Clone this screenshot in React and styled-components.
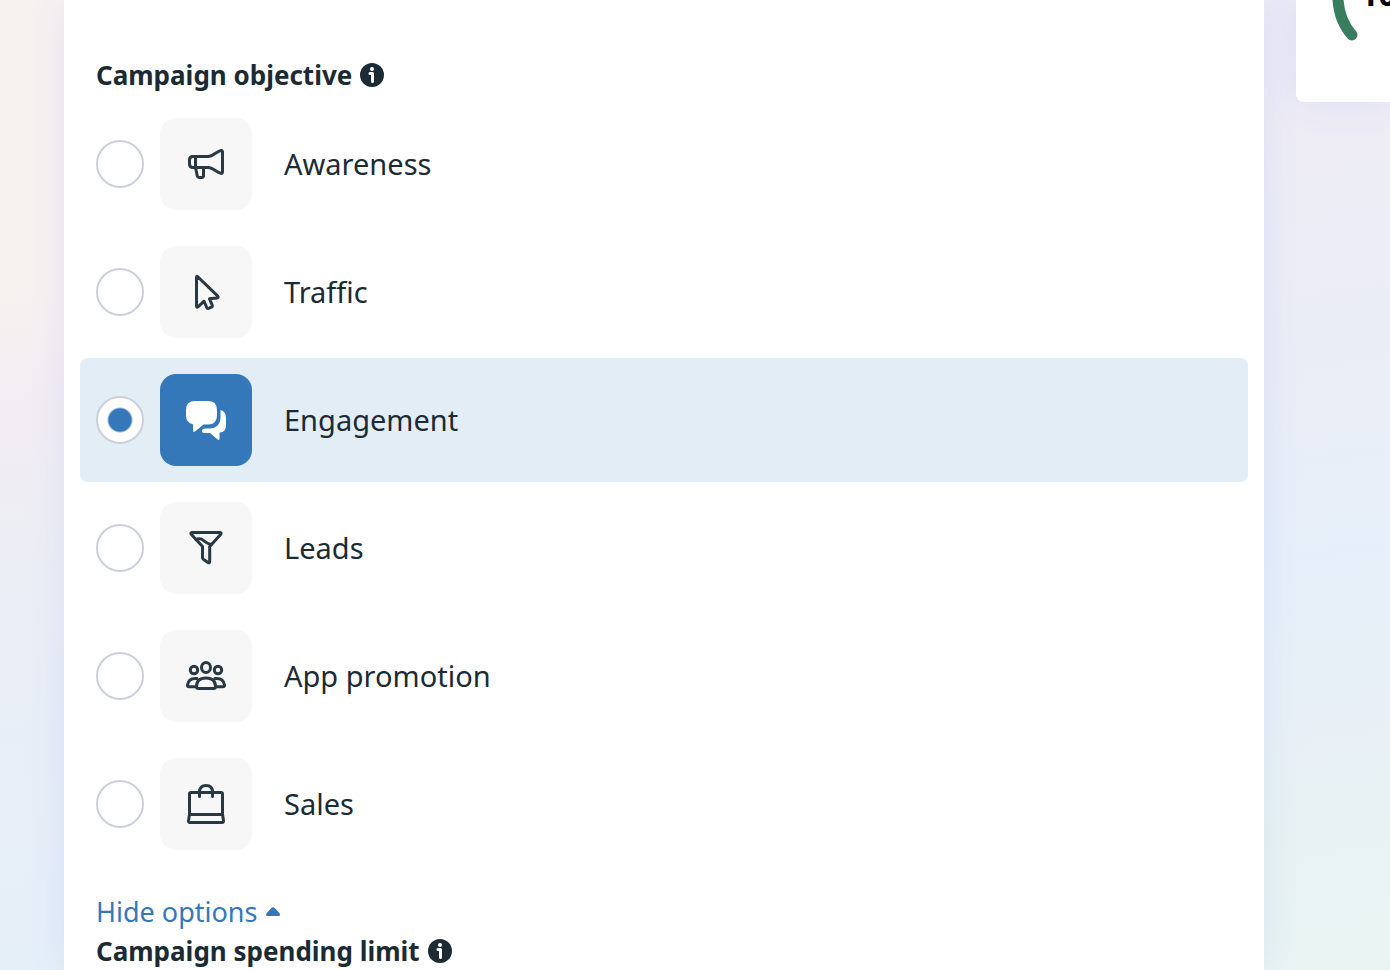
import React, { useState } from 'react';
import styled, { createGlobalStyle } from 'styled-components';

const GlobalStyle = createGlobalStyle`
  *, *::before, *::after { box-sizing: border-box; }
  body {
    margin: 0;
    color: #1c2b33;
    font-family: "Noto Sans", "Open Sans", sans-serif;
  }
`;

const Page = styled.div`
  display: flex;
  align-items: flex-start;
  gap: 32px;
  min-height: 100vh;
  padding-left: 64px;
  overflow: hidden;
  background:
    linear-gradient(#f7f1f0 0%, #f7f1f0 30%, #f2edf3 42%, #ebeef5 60%, #e8eef7 75%, #e5eff8 100%) left / 50% 100% no-repeat,
    linear-gradient(172deg, #ebe9f5 0%, #eeecf5 18%, #eaedf6 42%, #e6eff9 60%, #e8f0f7 74%, #e8f2f3 86%, #e9f4f2 100%) right / 50% 100% no-repeat;
`;

const Card = styled.main`
  flex: 1;
  min-width: 0;
  min-height: 100vh;
  padding: 56px 16px 0;
  background: #fff;
  box-shadow: 0 0 36px rgba(80, 120, 240, 0.1);
`;

const Heading = styled.h2`
  display: flex;
  align-items: center;
  gap: 8px;
  margin: 0;
  padding: 0 16px;
  font-size: 26px;
  font-weight: 700;
  line-height: 38px;
`;

const Objectives = styled.fieldset`
  display: flex;
  flex-direction: column;
  gap: 4px;
  min-width: 0;
  margin: 8px 0 0;
  padding: 0;
  border: 0;
`;

const Option = styled.label`
  display: flex;
  align-items: center;
  gap: 16px;
  padding: 16px;
  border-radius: 8px;
  background: ${(p) => (p.$selected ? '#e2edf6' : 'transparent')};
  cursor: pointer;
`;

const Radio = styled.input`
  appearance: none;
  flex: none;
  width: 48px;
  height: 48px;
  margin: 0;
  border: 2px solid #cbd0d9;
  border-radius: 50%;
  background: #fff;
  &:checked {
    background: radial-gradient(circle, #3578ba 11px, #fff 13px);
  }
`;

const Tile = styled.span`
  display: grid;
  place-items: center;
  flex: none;
  width: 92px;
  height: 92px;
  border-radius: 16px;
  color: ${(p) => (p.$selected ? '#fff' : '#283943')};
  background: ${(p) => (p.$selected ? '#3578ba' : '#f7f7f7')};
`;

const OptionText = styled.span`
  padding-left: 16px;
  font-size: 29px;
  line-height: 40px;
`;

const InfoButton = styled.button`
  display: flex;
  padding: 0;
  border: 0;
  color: inherit;
  background: none;
`;

const ToggleButton = styled.button`
  display: flex;
  align-items: center;
  gap: 8px;
  margin-top: 26px;
  padding: 0 16px;
  border: 0;
  color: #3578ba;
  background: none;
  font-family: inherit;
  font-size: 27px;
  line-height: 40px;
  cursor: pointer;
`;

const ScoreCard = styled.aside`
  flex: 0 0 94px;
  height: 102px;
  overflow: hidden;
  border-bottom-left-radius: 8px;
  background: #fff;
  box-shadow: 0 0 36px rgba(80, 120, 240, 0.1);
`;

const Drawing = styled.svg`
  display: block;
  flex: none;
  overflow: visible;
`;

const Glyph = ({ children }) => (
  <Drawing width="60" height="60" viewBox="0 0 60 60" fill="none" stroke="currentColor" strokeWidth="3" strokeLinejoin="round" strokeLinecap="round" aria-hidden="true">
    {children}
  </Drawing>
);

const icons = {
  awareness: (
    <Glyph>
      <path d="M17 22.5H32C37 22.5 41 17 45 16.5Q46.5 16.3 46.5 18V38Q46.5 39.7 45 39.3C41 38.5 37 33.5 32 33.5H17Q13.5 33.5 13.5 30V26Q13.5 22.5 17 22.5Z" />
      <path d="M19.5 22.5V33.5L21.3 42Q21.6 43.5 23 43.5H25.5Q27.5 43.5 27.5 41.5V34" />
    </Glyph>
  ),
  traffic: (
    <Glyph>
      <path d="M20.5 15.5Q20.5 13.5 22 15L41.8 34.2Q42.8 35.7 41 35.9L33.5 36.8L36.2 43.2Q36.7 44.6 35.4 45.2L32.6 46.3Q31.2 46.8 30.7 45.5L28 39.2L22 44.8Q20.5 46 20.5 44Z" />
    </Glyph>
  ),
  engagement: (
    <Drawing width="60" height="60" viewBox="0 0 60 60" fill="currentColor" aria-hidden="true">
      <path d="M19 11H32Q41 11 41 20V25.5Q41 34.5 32 34.5H27.5L19 41.5Q17 42.8 17 40.5V34.3Q10 33 10 25.5V20Q10 11 19 11Z" />
      <path d="M44.5 20Q50 21.500 50 28V35.500Q50 42 43.500 42.800V48.500Q43.500 51 41.300 49.300L34 43H28Q25.500 42.800 26 40.500Q26.300 38.800 29 38.600H33Q44.500 38 44.500 27Z" />
    </Drawing>
  ),
  leads: (
    <Glyph>
      <path d="M16 14.5H44Q45.8 14.7 44.8 16.2L33.7 28.5V43.5Q33.5 45.5 32 44.5L27.3 41.2Q26.5 40.5 26.5 39.5V28.5L15.2 16.2Q14.2 14.7 16 14.5Z" />
      <path d="M20 21.500C23.500 20.300 25.500 20.500 27.500 22.500C29.500 24.500 31.500 25.500 35 26.500" />
    </Glyph>
  ),
  app: (
    <Glyph>
      <ellipse cx="30" cy="21.5" rx="4.5" ry="5" />
      <circle cx="18" cy="24" r="3.700" />
      <circle cx="42" cy="24" r="3.700" />
      <path d="M20.5 40.5C20.5 35 24 32 30 32S39.5 35 39.5 40.5Q39.5 42.5 37.5 42.5H22.5Q20.5 42.5 20.5 40.5Z" />
      <path d="M19 40.800H13Q11.300 40.800 11.500 39C12 35 15 32 21 32.500" />
      <path d="M41 40.800H47Q48.700 40.800 48.500 39C48 35 45 32 39 32.500" />
    </Glyph>
  ),
  sales: (
    <Glyph>
      <path d="M15 18.5H45Q46.5 18.5 46.5 20V40.5L47.5 46.5Q47.7 48.5 46 48.5H14Q12.3 48.5 12.5 46.5L13.5 40.5V20Q13.5 18.5 15 18.5Z" />
      <path d="M13.5 40.5H46.5M23.5 22.5V18C23.5 13.8 26 11.5 30 11.5S36.5 13.8 36.5 18V22.5" />
    </Glyph>
  ),
};

const Info = ({ label }) => (
  <InfoButton type="button" aria-label={label}>
    <Drawing width="24" height="24" viewBox="0 0 24 24" aria-hidden="true">
      <circle cx="12" cy="12" r="12" fill="#1c2b33" />
      <circle cx="12" cy="6" r="2" fill="#fff" />
      <path d="M10 10.5H12.5V18.5" fill="none" stroke="#fff" strokeWidth="3" strokeLinecap="round" strokeLinejoin="round" />
    </Drawing>
  </InfoButton>
);

const objectives = [
  ['awareness', 'Awareness'],
  ['traffic', 'Traffic'],
  ['engagement', 'Engagement'],
  ['leads', 'Leads'],
  ['app', 'App promotion'],
  ['sales', 'Sales'],
];

export default function App() {
  const [selected, setSelected] = useState('engagement');
  return (
    <>
      <GlobalStyle />
      <Page>
        <Card>
          <Heading id="objective">
            Campaign objective
            <Info label="About campaign objective" />
          </Heading>
          <Objectives aria-labelledby="objective">
            {objectives.map(([id, label]) => (
              <Option key={id} $selected={selected === id}>
                <Radio type="radio" name="objective" value={id} checked={selected === id} onChange={() => setSelected(id)} />
                <Tile $selected={selected === id}>{icons[id]}</Tile>
                <OptionText>{label}</OptionText>
              </Option>
            ))}
          </Objectives>
          <ToggleButton type="button" aria-expanded="true">
            Hide options
            <Drawing width="16" height="10" viewBox="0 0 16 10" fill="currentColor" aria-hidden="true">
              <path d="M1.8 6L6.3 1Q8 -0.6 9.7 1L14.4 6Q16 8.8 13.5 9H2.5Q0 8.8 1.8 6Z" />
            </Drawing>
          </ToggleButton>
          <Heading>
            Campaign spending limit
            <Info label="About campaign spending limit" />
          </Heading>
        </Card>
        <ScoreCard aria-label="Campaign score">
          <Drawing width="94" height="102" viewBox="0 0 94 102" aria-hidden="true">
            <path d="M42 0C43 14 48 26 56 35" fill="none" stroke="#387d5e" strokeWidth="11" strokeLinecap="round" />
            <text x="64" y="6" fontSize="32" fontWeight="700" fill="#000">100</text>
          </Drawing>
        </ScoreCard>
      </Page>
    </>
  );
}
